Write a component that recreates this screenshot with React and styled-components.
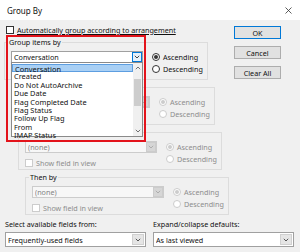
import React from 'react';
import styled, { createGlobalStyle } from 'styled-components';

const GlobalStyle = createGlobalStyle`
  html, body { margin: 0; padding: 0; }
  body { background: #f0f0f0; }
  * { box-sizing: border-box; }
`;

const Dialog = styled.div`
  position: relative;
  width: 300px;
  height: 252px;
  overflow: hidden;
  background: #f0f0f0;
  font-family: "Noto Sans", "Open Sans", sans-serif;
  font-size: 7.2px;
  color: #111;
  display: flex;
  flex-direction: column;
`;

const TitleBar = styled.div`
  height: 20px;
  flex: none;
  background: #fff;
  display: flex;
  align-items: center;
  justify-content: space-between;
  padding: 0 8px 0 7px;
  font-size: 8px;
`;

const Body = styled.div`
  flex: 1;
  display: flex;
  flex-direction: column;
  padding: 0 6px 5px 4px;
`;

const TopArea = styled.div`
  display: flex;
  align-items: flex-start;
`;

const Main = styled.div`
  width: 228px;
  flex: none;
  display: flex;
  flex-direction: column;
`;

const ButtonColumn = styled.div`
  margin: 6px 0 0 2px;
  display: flex;
  flex-direction: column;
  gap: 7px;
`;

const Button = styled.button`
  width: 47px;
  height: 13px;
  padding: 0;
  font: inherit;
  color: #111;
  background: #e1e1e1;
  border: 1px solid ${p => (p.$default ? '#0078d7' : '#adadad')};
`;

const CheckRow = styled.div`
  display: flex;
  align-items: center;
  gap: 3px;
  height: 10px;
  margin: ${p => (p.$top ? '5px 0 2px 2px' : '5px 0 0 0')};
  color: ${p => (p.$disabled ? '#8d8d8d' : '#111')};
  white-space: nowrap;
`;

const Box = styled.span`
  flex: none;
  width: 8px;
  height: 8px;
  background: #fff;
  border: 1px solid ${p => (p.$disabled ? '#cccccc' : '#333')};
`;

const Underlined = styled.span`
  text-decoration: underline;
`;

const Group = styled.fieldset`
  position: relative;
  margin: 0 0 2px ${p => p.$level * 7}px;
  width: 204px;
  height: 43px;
  padding: 4px 6px 0;
  border: 1px solid #dcdcdc;
  display: grid;
  grid-template-columns: 132px auto;
  column-gap: 9px;
  align-content: start;
  min-width: 0;
`;

const Legend = styled.legend`
  padding: 0 1px;
  margin-left: -3px;
  line-height: 10px;
  color: #111;
`;

const Select = styled.div`
  position: relative;
  height: ${p => (p.$tall ? 15 : 12)}px;
  display: flex;
  align-items: center;
  padding-left: 2px;
  background: ${p => (p.$disabled ? '#f7f7f7' : '#fff')};
  border: 1px solid ${p => (p.$disabled ? '#cccccc' : '#a0a0a0')};
  color: ${p => (p.$disabled ? '#838383' : '#111')};
`;

const SelectText = styled.span`
  flex: 1;
  white-space: nowrap;
  overflow: hidden;
`;

const ArrowBox = styled.span`
  flex: none;
  width: ${p => (p.$tall ? 12 : 10)}px;
  align-self: stretch;
  margin: ${p => (p.$tall ? '1px' : '0')};
  display: flex;
  align-items: center;
  justify-content: center;
  background: ${p => (p.$focus ? '#e5f1fb' : p.$disabled ? '#d6d6d6' : '#e5e5e5')};
  border: 1px solid ${p => (p.$focus ? '#0078d7' : p.$disabled ? '#cccccc' : '#d0d0d0')};
`;

const Radios = styled.div`
  grid-row: 1 / span 2;
  grid-column: 2;
  padding-top: 1px;
  display: flex;
  flex-direction: column;
  gap: 2px;
`;

const RadioRow = styled.div`
  display: flex;
  align-items: center;
  gap: 3px;
  height: 10px;
  color: ${p => (p.$disabled ? '#8d8d8d' : '#111')};
`;

const RadioDot = styled.span`
  flex: none;
  width: 8px;
  height: 8px;
  border-radius: 50%;
  background: #fff;
  border: 1px solid ${p => (p.$disabled ? '#cccccc' : '#333')};
  display: flex;
  align-items: center;
  justify-content: center;

  &::after {
    content: '';
    width: 4px;
    height: 4px;
    border-radius: 50%;
    background: ${p => (p.$disabled ? '#cccccc' : '#333')};
    display: ${p => (p.$checked ? 'block' : 'none')};
  }
`;

const DropList = styled.div`
  position: absolute;
  top: 100%;
  left: -1px;
  right: -1px;
  height: 75px;
  display: flex;
  background: #fff;
  border: 1px solid #8a8a8a;
  z-index: 2;
`;

const Items = styled.div`
  flex: 1;
  padding-top: 1px;
  font-size: 7.4px;
`;

const Item = styled.div`
  height: 8.4px;
  line-height: 8px;
  padding-left: 2px;
  white-space: nowrap;
  background: ${p => (p.$selected ? '#a9d0f5' : 'transparent')};
  border: ${p => (p.$selected ? '0.5px solid #5d9ee0' : 'none')};
`;

const ScrollBar = styled.div`
  width: 9px;
  flex: none;
  background: #f0f0f0;
  display: flex;
  flex-direction: column;
  align-items: center;
`;

const ScrollArrow = styled.div`
  height: 10px;
  display: flex;
  align-items: center;
  justify-content: center;
`;

const Thumb = styled.div`
  width: 7px;
  height: 27px;
  margin-top: 6px;
  background: #cdcdcd;
`;

const Spacer = styled.div`
  flex: 1;
`;

const BottomRow = styled.div`
  margin-top: auto;
  margin-left: 1px;
  display: grid;
  grid-template-columns: 141px 141px;
  column-gap: 7px;
`;

const Field = styled.div`
  display: flex;
  flex-direction: column;
  gap: 3px;
`;

const FieldLabel = styled.div`
  height: 10px;
  line-height: 10px;
`;

const Highlight = styled.div`
  position: absolute;
  left: 6px;
  top: 35px;
  width: 140px;
  height: 107px;
  border: 2px solid #e3131b;
  z-index: 3;
  pointer-events: none;
`;

const Chevron = ({ dir = 'down', color = '#444' }) => (
  <svg width="6" height="4" viewBox="0 0 6 4">
    <polyline
      points={dir === 'down' ? '0.8,0.8 3,3 5.2,0.8' : '0.8,3.2 3,1 5.2,3.2'}
      fill="none"
      stroke={color}
      strokeWidth="0.9"
    />
  </svg>
);

const CloseIcon = () => (
  <svg width="7" height="7" viewBox="0 0 7 7">
    <path d="M0.5 0.5 L6.5 6.5 M6.5 0.5 L0.5 6.5" stroke="#333" strokeWidth="0.8" />
  </svg>
);

const fields = [
  'Conversation',
  'Created',
  'Do Not AutoArchive',
  'Due Date',
  'Flag Completed Date',
  'Flag Status',
  'Follow Up Flag',
  'From',
  'IMAP Status',
];

function SortGroup({ level, title, value, disabled, open }) {
  return (
    <Group $level={level}>
      <Legend>{title}</Legend>
      <Select $disabled={disabled}>
        <SelectText>{value}</SelectText>
        <ArrowBox $focus={open} $disabled={disabled}>
          <Chevron color={disabled ? '#a8a8a8' : '#333'} />
        </ArrowBox>
        {open && (
          <DropList>
            <Items>
              {fields.map((f, i) => (
                <Item key={f} $selected={i === 0}>{f}</Item>
              ))}
            </Items>
            <ScrollBar>
              <ScrollArrow><Chevron dir="up" color="#606060" /></ScrollArrow>
              <Thumb />
              <Spacer />
              <ScrollArrow><Chevron color="#606060" /></ScrollArrow>
            </ScrollBar>
          </DropList>
        )}
      </Select>
      <CheckRow $disabled>
        <Box $disabled />
        Show field in view
      </CheckRow>
      <Radios>
        <RadioRow $disabled={disabled}>
          <RadioDot $checked $disabled={disabled} />
          Ascending
        </RadioRow>
        <RadioRow $disabled={disabled}>
          <RadioDot $disabled={disabled} />
          Descending
        </RadioRow>
      </Radios>
    </Group>
  );
}

export default function App() {
  return (
    <Dialog>
      <GlobalStyle />
      <TitleBar>
        <span>Group By</span>
        <CloseIcon />
      </TitleBar>
      <Body>
        <TopArea>
          <Main>
            <CheckRow $top>
              <Box />
              <Underlined>Automatically group according to arrangement</Underlined>
            </CheckRow>
            <SortGroup level={0} title="Group items by" value="Conversation" open />
            <SortGroup level={1} title="Then by" value="(none)" disabled />
            <SortGroup level={2} title="Then by" value="(none)" disabled />
            <SortGroup level={3} title="Then by" value="(none)" disabled />
          </Main>
          <ButtonColumn>
            <Button $default>OK</Button>
            <Button>Cancel</Button>
            <Button>Clear All</Button>
          </ButtonColumn>
        </TopArea>
        <BottomRow>
          <Field>
            <FieldLabel>Select available fields from:</FieldLabel>
            <Select $tall>
              <SelectText>Frequently-used fields</SelectText>
              <ArrowBox $tall><Chevron /></ArrowBox>
            </Select>
          </Field>
          <Field>
            <FieldLabel>Expand/collapse defaults:</FieldLabel>
            <Select $tall>
              <SelectText>As last viewed</SelectText>
              <ArrowBox $tall><Chevron /></ArrowBox>
            </Select>
          </Field>
        </BottomRow>
      </Body>
      <Highlight />
    </Dialog>
  );
}
